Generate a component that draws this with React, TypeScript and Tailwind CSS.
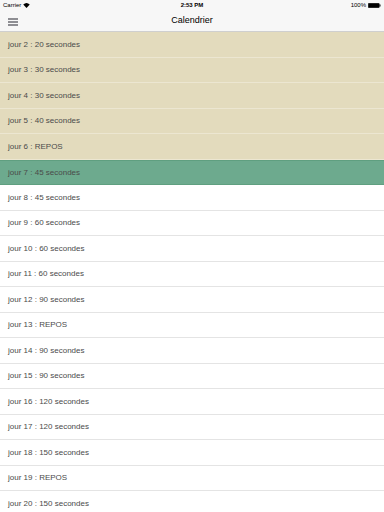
import React from "react";

const rows: { d: number; t: string }[] = [
  { d: 2, t: "20 secondes" },
  { d: 3, t: "30 secondes" },
  { d: 4, t: "30 secondes" },
  { d: 5, t: "40 secondes" },
  { d: 6, t: "REPOS" },
  { d: 7, t: "45 secondes" },
  { d: 8, t: "45 secondes" },
  { d: 9, t: "60 secondes" },
  { d: 10, t: "60 secondes" },
  { d: 11, t: "60 secondes" },
  { d: 12, t: "90 secondes" },
  { d: 13, t: "REPOS" },
  { d: 14, t: "90 secondes" },
  { d: 15, t: "90 secondes" },
  { d: 16, t: "120 secondes" },
  { d: 17, t: "120 secondes" },
  { d: 18, t: "150 secondes" },
  { d: 19, t: "REPOS" },
  { d: 20, t: "150 secondes" },
];

export default function App() {
  return (
    <div
      className="w-[384px] h-[512px] overflow-hidden bg-white flex flex-col"
      style={{ fontFamily: '"Liberation Sans", Arial, sans-serif' }}
    >
      <div className="bg-[#f7f7f7] shrink-0">
        <div className="h-[10px] flex items-center justify-between px-[3px] text-[6px] text-black relative">
          <div className="flex items-center gap-[2px]">
            <span>Carrier</span>
            <svg width="7" height="5" viewBox="0 0 14 10">
              <path d="M7 10 L0.5 3.2 A9.5 9.5 0 0 1 13.5 3.2 Z" fill="#000" />
            </svg>
          </div>
          <span className="absolute left-1/2 -translate-x-1/2 font-bold">2:53 PM</span>
          <div className="flex items-center gap-[2px]">
            <span>100%</span>
            <svg width="13" height="5" viewBox="0 0 26 10">
              <rect x="0.5" y="0.5" width="22" height="9" rx="1.5" fill="#000" stroke="#000" />
              <rect x="23" y="3" width="2" height="4" fill="#000" />
            </svg>
          </div>
        </div>
        <div className="h-[22px] relative flex items-center justify-center pt-[1px] border-b border-[#cfcfcf]">
          <div className="absolute left-[8px] top-[8px] flex flex-col gap-[1.5px]">
            <div className="w-[10px] h-[1.5px] bg-[#8e8e93]" />
            <div className="w-[10px] h-[1.5px] bg-[#8e8e93]" />
            <div className="w-[10px] h-[1.5px] bg-[#8e8e93]" />
          </div>
          <span className="text-[9px] text-black">Calendrier</span>
        </div>
      </div>
      <div className="flex flex-col">
        {rows.map((r, i) => {
          const past = i < 5;
          const cur = i === 5;
          const cls = past
            ? "bg-[#e3dbbd] border-b border-[#ece6d1]"
            : cur
            ? "bg-[#6daa8e] border-y border-[#5f9f80]"
            : "bg-white border-b border-[#e4e4e4]";
          return (
            <div
              key={r.d}
              className={`h-[25.5px] shrink-0 flex items-center pl-[8px] pt-[1px] text-[8px] text-[#4a4a4a] ${cls}`}
            >
              jour {r.d} : {r.t}
            </div>
          );
        })}
      </div>
    </div>
  );
}
